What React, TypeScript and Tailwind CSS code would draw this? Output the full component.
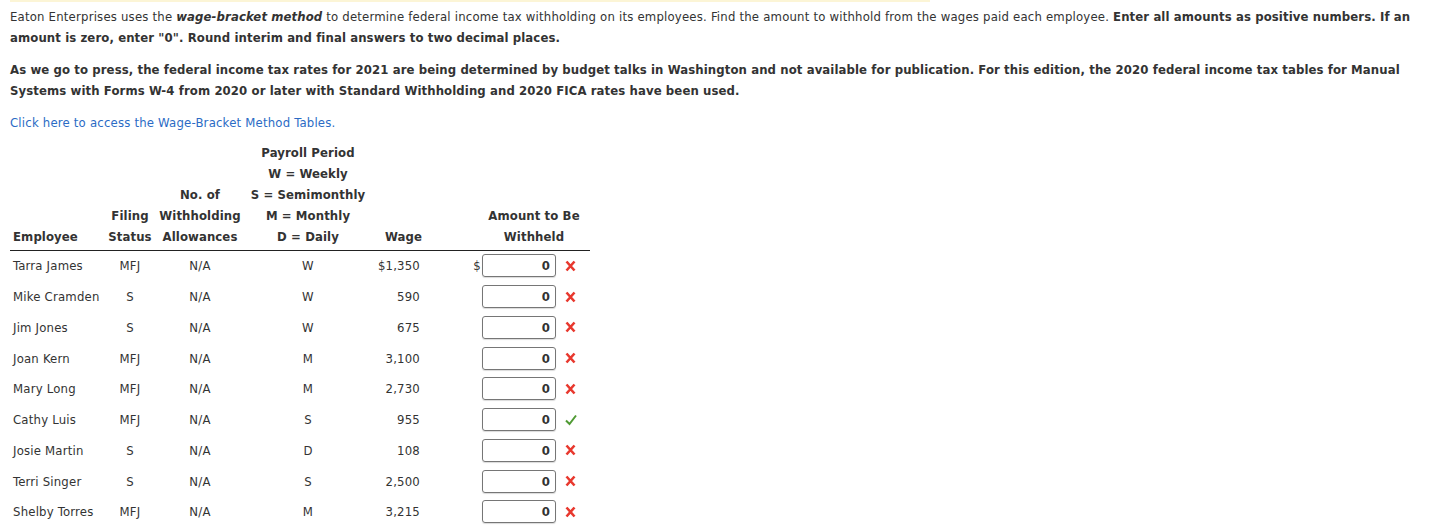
import React from "react";

const rows = [
  { name: "Tarra James", fs: "MFJ", pp: "W", wage: "$1,350", ok: false, dollar: true },
  { name: "Mike Cramden", fs: "S", pp: "W", wage: "590", ok: false },
  { name: "Jim Jones", fs: "S", pp: "W", wage: "675", ok: false },
  { name: "Joan Kern", fs: "MFJ", pp: "M", wage: "3,100", ok: false },
  { name: "Mary Long", fs: "MFJ", pp: "M", wage: "2,730", ok: false },
  { name: "Cathy Luis", fs: "MFJ", pp: "S", wage: "955", ok: true },
  { name: "Josie Martin", fs: "S", pp: "D", wage: "108", ok: false },
  { name: "Terri Singer", fs: "S", pp: "S", wage: "2,500", ok: false },
  { name: "Shelby Torres", fs: "MFJ", pp: "M", wage: "3,215", ok: false },
];

function XMark() {
  return (
    <svg width="11" height="12" viewBox="0 0 11 12" className="block">
      <path d="M1.5 1.5 L9.5 10.5 M9.5 1.5 L1.5 10.5" stroke="#e8382e" strokeWidth="2.6" strokeLinecap="butt" />
    </svg>
  );
}

function Check() {
  return (
    <svg width="12" height="12" viewBox="0 0 12 12" className="block">
      <path d="M1 6.5 L4.5 10 L11 1.5" stroke="#4f9a33" strokeWidth="2" fill="none" />
    </svg>
  );
}

const grid = "grid grid-cols-[95px_50px_90px_126px_62px_157px]";

export default function App() {
  return (
    <div className="pl-[10px] pr-[10px] text-[13px] leading-[21px] tracking-[0.2px] text-[#333333] font-['DejaVu_Sans_Condensed','DejaVu_Sans',sans-serif]">
      <div className="h-[2px] w-[920px] bg-[#fcf5d6]" />
      <p className="mt-[3.5px]">
        Eaton Enterprises uses the <b className="tracking-[0.1px]"><i>wage-bracket method</i></b> to determine federal income tax withholding on its employees. Find the amount to withhold from the wages paid each employee.{" "}
        <b className="tracking-[0.1px]">Enter all amounts as positive numbers. If an amount is zero, enter "0". Round interim and final answers to two decimal places.</b>
      </p>
      <p className="mt-[11px] font-bold tracking-[0.1px]">
        As we go to press, the federal income tax rates for 2021 are being determined by budget talks in Washington and not available for publication. For this edition, the 2020 federal income tax tables for Manual Systems with Forms W-4 from 2020 or later with Standard Withholding and 2020 FICA rates have been used.
      </p>
      <p className="mt-[11px] text-[#2b6bc5]">Click here to access the Wage-Bracket Method Tables.</p>

      <div className="mt-[9px] w-[580px]">
        <div className={`${grid} items-end border-b-[1.5px] border-[#222] pb-[3px] font-bold tracking-[0.1px]`}>
          <div className="pl-[3px]">Employee</div>
          <div className="text-center">Filing<br />Status</div>
          <div className="text-center">No. of<br />Withholding<br />Allowances</div>
          <div className="text-center">Payroll Period<br />W = Weekly<br />S = Semimonthly<br />M = Monthly<br />D = Daily</div>
          <div className="text-right pr-[11px]">Wage</div>
          <div className="text-center pl-[45px]">Amount to Be<br />Withheld</div>
        </div>
        {rows.map((r) => (
          <div key={r.name} className={`${grid} h-[30.75px] items-center`}>
            <div className="pl-[3px]">{r.name}</div>
            <div className="text-center">{r.fs}</div>
            <div className="text-center">N/A</div>
            <div className="text-center">{r.pp}</div>
            <div className="text-right pr-[13px]">{r.wage}</div>
            <div className="flex items-center">
              <div className="w-[49px] text-right pr-[1px]">{r.dollar ? "$" : ""}</div>
              <div className="w-[74px] h-[23px] rounded-[3px] border border-[#767676] shadow-[0_1px_1px_rgba(0,0,0,0.15)] flex items-center justify-end pr-[5px] font-bold text-[#333]">0</div>
              <div className="ml-[9px]">{r.ok ? <Check /> : <XMark />}</div>
            </div>
          </div>
        ))}
      </div>
    </div>
  );
}
